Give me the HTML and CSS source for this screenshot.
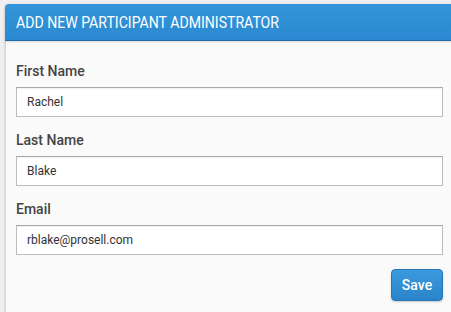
FILE: index.html
```html
<!DOCTYPE html>
<html>
<head>
<meta charset="utf-8">
<link rel="stylesheet" href="styles.css">
</head>
<body>
<div class="panel">
  <div class="panel-header"><span class="panel-title">ADD NEW PARTICIPANT ADMINISTRATOR</span></div>
  <form class="panel-body">
    <div class="field">
      <label class="label">First Name</label>
      <input class="input" type="text" value="Rachel">
    </div>
    <div class="field">
      <label class="label">Last Name</label>
      <input class="input" type="text" value="Blake">
    </div>
    <div class="field">
      <label class="label">Email</label>
      <input class="input" type="text" value="rblake@prosell.com">
    </div>
    <div class="actions">
      <button class="btn" type="button">Save</button>
    </div>
  </form>
</div>
</body>
</html>
```

FILE: styles.css
```css
html, body {
  margin: 0;
  padding: 0;
}
body {
  background: #efefef;
  font-family: Roboto, "Liberation Sans", Arial, sans-serif;
  overflow: hidden;
  height: 312px;
}
.panel {
  margin: 4px -12px 0 5px;
  background: #fafafa;
  border-left: 1px solid #d8d8d8;
  border-radius: 4px 4px 0 0;
  box-shadow: -1px 0 2px rgba(0,0,0,0.08);
  height: 320px;
}
.panel-header {
  height: 36px;
  margin-left: -1px;
  padding-left: 11px;
  display: flex;
  align-items: center;
  background: linear-gradient(#3595da, #2a89d0);
  border-bottom: 1px solid #1f6dab;
  border-radius: 4px 4px 0 0;
  color: #fff;
  font-size: 16px;
  font-weight: 400;
  box-shadow: 0 1px 2px rgba(0,0,0,0.15);
}
.panel-title {
  display: inline-block;
  white-space: nowrap;
  transform: scaleX(0.88);
  transform-origin: left center;
}
.panel-body {
  display: flex;
  flex-direction: column;
  padding: 20px 20px 0 10px;
  margin: 0;
}
.field {
  display: flex;
  flex-direction: column;
  margin-bottom: 13px;
}
.label {
  font-size: 14px;
  font-weight: 500;
  line-height: 20px;
  color: #444;
  margin-bottom: 6px;
}
.input {
  box-sizing: border-box;
  height: 30px;
  margin: 0;
  padding: 0 10px;
  border: 1px solid #bcbcbc;
  border-top-color: #a8a8a8;
  background: #fff;
  font-family: Roboto, "Liberation Sans", Arial, sans-serif;
  font-size: 12px;
  color: #333;
  box-shadow: inset 0 1px 1px rgba(0,0,0,0.06);
  outline: none;
}
.actions {
  display: flex;
  justify-content: flex-end;
  margin-top: 1px;
}
.btn {
  width: 52px;
  height: 32px;
  border: 1px solid #2577b8;
  border-radius: 4px;
  background: linear-gradient(#3b9ade, #2a84c9);
  color: #fff;
  font-family: Roboto, "Liberation Sans", Arial, sans-serif;
  font-size: 14px;
  font-weight: 500;
  padding: 0;
  box-shadow: 0 1px 2px rgba(0,0,0,0.2);
}
```
